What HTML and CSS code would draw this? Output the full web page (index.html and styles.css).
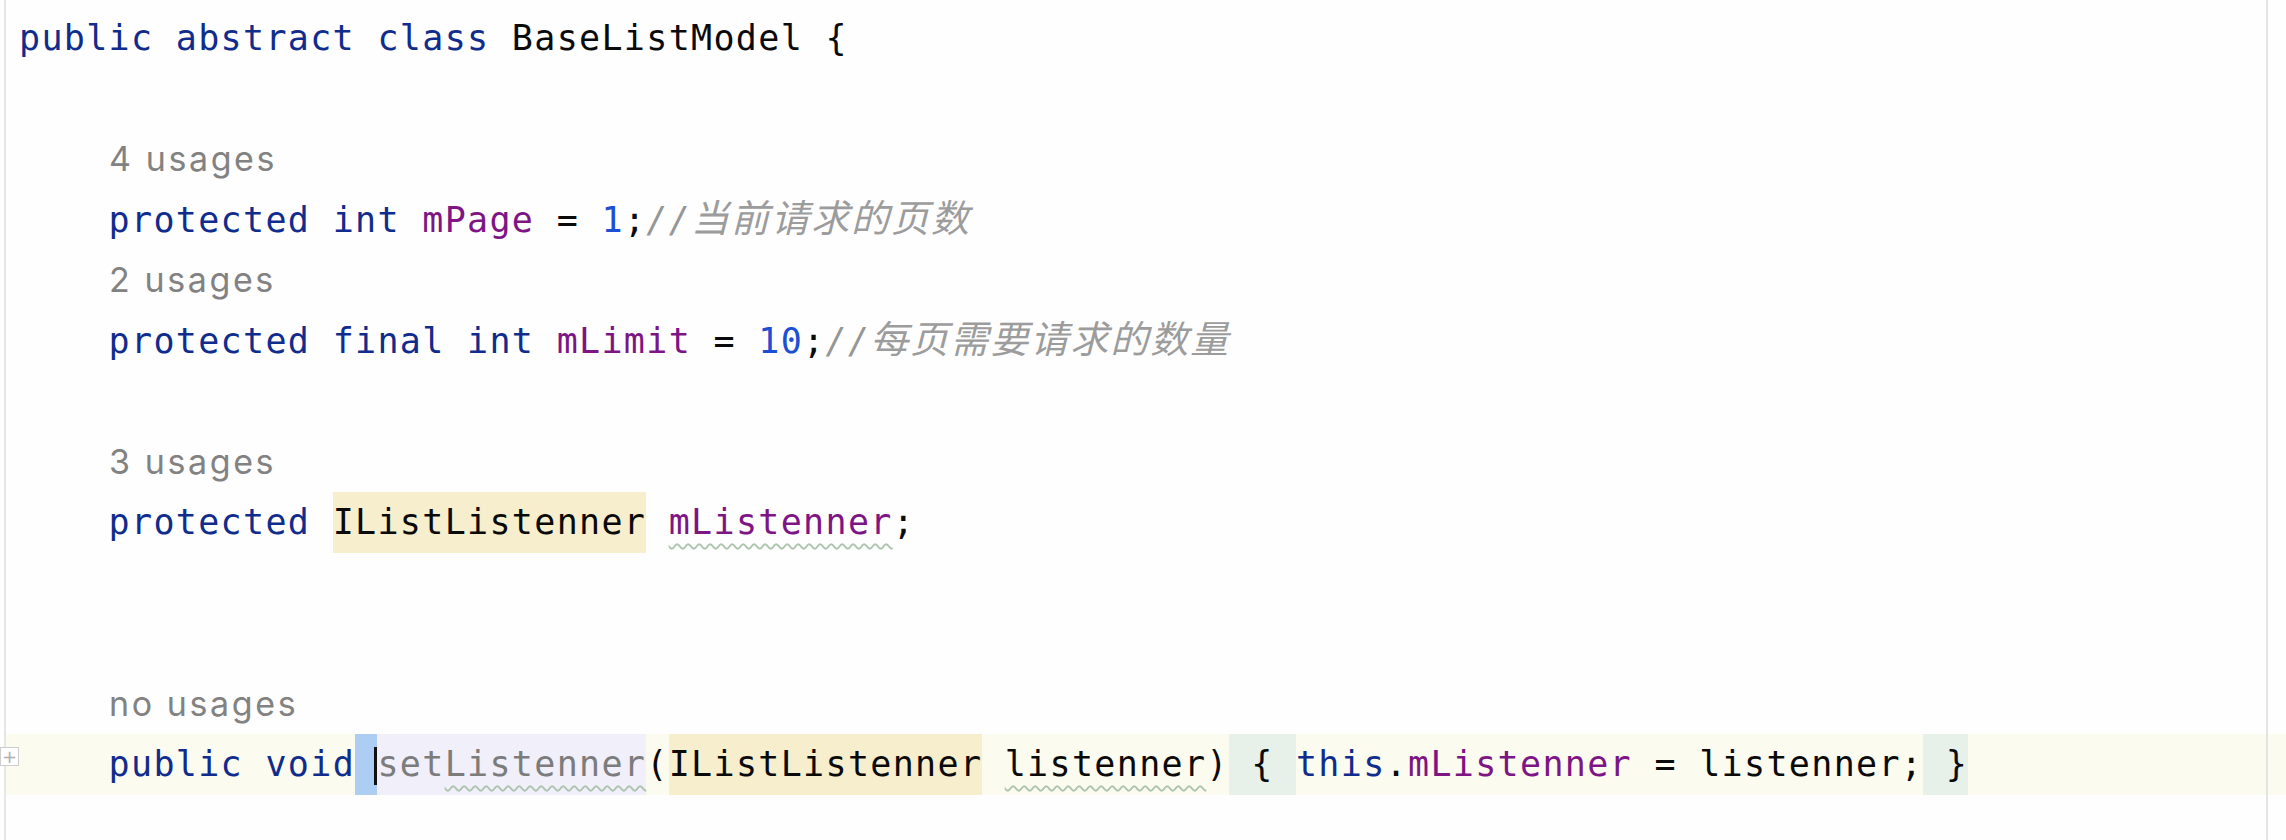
FILE: index.html
```html
<!DOCTYPE html>
<html lang="en">
<head>
<meta charset="utf-8">
<title>BaseListModel.java</title>
<link rel="stylesheet" href="styles.css">
</head>
<body>
<div class="editor">
  <div class="gutter"></div>
  <div class="code">
    <div class="line"><span class="kw">public abstract class</span> BaseListModel {</div>
    <div class="line"> </div>
    <div class="line hint">4 usages</div>
    <div class="line">    <span class="kw">protected int</span> <span class="fld">mPage</span> = <span class="num">1</span>;<span class="cmt">//<span class="cjk">当前请求的页数</span></span></div>
    <div class="line hint">2 usages</div>
    <div class="line">    <span class="kw">protected final int</span> <span class="fld">mLimit</span> = <span class="num">10</span>;<span class="cmt">//<span class="cjk">每页需要请求的数量</span></span></div>
    <div class="line"> </div>
    <div class="line hint">3 usages</div>
    <div class="line">    <span class="kw">protected</span> <span class="hl-type">IListListenner</span> <span class="fld wavy">mListenner</span>;</div>
    <div class="line"> </div>
    <div class="line"> </div>
    <div class="line hint">no usages</div>
    <div class="line current">    <span class="kw">public void</span><span class="sel"> </span><span class="caret"></span><span class="unused">set<span class="wavy">Listenner</span></span>(<span class="hl-type">IListListenner</span> <span class="wavy">listenner</span>)<span class="fold"> { </span><span class="kw">this</span>.<span class="fld">mListenner</span> = listenner;<span class="fold"> }</span></div>
  </div>
  <div class="margin-guide"></div>
  <div class="fold-marker">+</div>
</div>
</body>
</html>
```

FILE: styles.css
```css
html, body {
  margin: 0;
  padding: 0;
  background: #fefefe;
}

.editor {
  position: relative;
  display: flex;
  width: 2286px;
  height: 840px;
  overflow: hidden;
}

.gutter {
  flex: none;
  width: 4px;
  border-right: 2px solid #e6e6e6;
}

.code {
  flex: 1;
  padding-top: 8px;
  font-family: "DejaVu Sans Mono", "Noto Sans CJK SC", monospace;
  font-size: 35px;
  letter-spacing: 1.33px;
  color: #0a0a0a;
}

.line {
  height: 60.5px;
  line-height: 60.5px;
  white-space: pre;
  padding-left: 13px;
}

.line.current {
  background: #fcfbef;
}

.hint {
  font-family: "Inter", "Noto Sans", sans-serif;
  font-size: 34px;
  letter-spacing: 2.6px;
  color: #828282;
  padding-left: 103px;
}

.kw { color: #102c8c; }
.fld { color: #7d1585; }
.num { color: #1d4fd6; }

.cmt {
  color: #969696;
  font-style: italic;
}

.cjk {
  font-family: "Noto Sans CJK SC", sans-serif;
  font-size: 38px;
  line-height: 1;
  letter-spacing: 2px;
  color: #9c9c9c;
}

.wavy {
  text-decoration-line: underline;
  text-decoration-style: wavy;
  text-decoration-color: #aec4ae;
  text-decoration-thickness: 1.5px;
  text-underline-offset: 9px;
}

.hl-type {
  display: inline-block;
  background: #f6eecd;
}

.unused {
  display: inline-block;
  background: #f0effa;
  color: #7c7c7c;
}

.sel {
  display: inline-block;
  background: #aecdf2;
}

.fold {
  display: inline-block;
  background: #e8f0ea;
}

.caret {
  display: inline-block;
  width: 3px;
  height: 38px;
  margin-left: -3px;
  background: #111;
  vertical-align: -9px;
}

.margin-guide {
  position: absolute;
  top: 0;
  left: 2266px;
  width: 2px;
  height: 100%;
  background: #e4e4e4;
}

.fold-marker {
  position: absolute;
  left: 0;
  top: 747px;
  width: 17px;
  height: 17px;
  border: 1px solid #cdcdcd;
  background: #fefefe;
  color: #b0b0b0;
  font-family: "DejaVu Sans", sans-serif;
  font-size: 18px;
  line-height: 17px;
  text-align: center;
}
```
